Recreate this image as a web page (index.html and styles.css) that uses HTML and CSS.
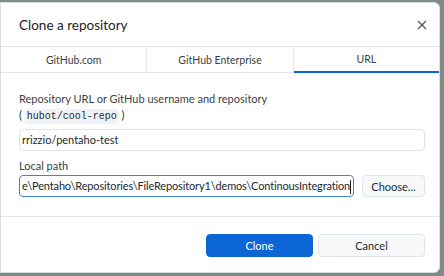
FILE: index.html
```html
<!DOCTYPE html>
<html lang="en">

<head>
    <meta charset="UTF-8">
    <meta name="viewport" content="width=device-width, initial-scale=1.0">
    <title>Clone a repository</title>
    <link rel="stylesheet" href="styles.css">
</head>

<body>
    <div class="dialog">
        <div class="header">
            <div class="title">Clone a repository</div>
            <div class="close">
                <svg width="10" height="10" viewBox="0 0 10 10">
                    <path d="M1 1L9 9M9 1L1 9" stroke="#555" stroke-width="1.3" fill="none"/>
                </svg>
            </div>
        </div>
        <div class="tabs">
            <div class="tab">GitHub.com</div>
            <div class="tab">GitHub Enterprise</div>
            <div class="tab active">URL</div>
        </div>
        <div class="content">
            <div class="label">Repository URL or GitHub username and repository</div>
            <div class="hint">( <code>hubot/cool-repo</code> )</div>
            <div class="input">rrizzio/pentaho-test</div>

            <div class="label path-label">Local path</div>
            <div class="row">
                <div class="input focused">e\Pentaho\Repositories\FileRepository1\demos\ContinousIntegration<span class="caret"></span></div>
                <button class="btn">Choose...</button>
            </div>
        </div>
        <div class="footer">
            <button class="btn primary">Clone</button>
            <button class="btn">Cancel</button>
        </div>
    </div>
</body>

</html>
```
FILE: styles.css
```css
body {
    margin: 0;
    padding: 2px 4px 3px 0;
    height: 276px;
    box-sizing: border-box;
    background-color: #7f8b87;
    font-family: Lato, sans-serif;
    color: #24292e;
    overflow: hidden;
}

.dialog {
    background-color: white;
    border: 1px solid #d8dde2;
    border-radius: 0 6px 6px 0;
    height: 100%;
    box-sizing: border-box;
    display: flex;
    flex-direction: column;
}

.header {
    display: flex;
    align-items: center;
    justify-content: space-between;
    height: 43px;
    padding: 0 12px 0 18px;
    border-bottom: 1px solid #e4e7ea;
}

.title {
    font-size: 13.5px;
    color: #1f2326;
}

.close {
    display: flex;
}

.tabs {
    display: flex;
    height: 25px;
    border-bottom: 1px solid #e4e7ea;
}

.tab {
    flex: 1;
    display: flex;
    align-items: center;
    justify-content: center;
    font-size: 10.5px;
    color: #3a3f44;
    border-right: 1px solid #e4e7ea;
}

.tab:last-child {
    border-right: none;
}

.tab.active {
    border-bottom: 2px solid #0b65d5;
    margin-bottom: -1px;
}

.content {
    padding: 18px 14px 0 18px;
    border-bottom: 1px solid #e4e7ea;
    height: 144px;
    box-sizing: border-box;
}

.label {
    font-size: 11px;
    line-height: 16px;
    color: #3a3f44;
}

.hint {
    font-size: 11px;
    line-height: 16px;
    margin-bottom: 4px;
}

code {
    font-family: "Liberation Mono", monospace;
    font-size: 10px;
    background-color: #eef3f8;
    padding: 2px 2px;
    border-radius: 3px;
}

.input {
    height: 22px;
    box-sizing: border-box;
    border: 1px solid #dfe3e7;
    border-radius: 4px;
    font-size: 11px;
    line-height: 20px;
    padding: 0 2px;
    white-space: nowrap;
    overflow: hidden;
}

.path-label {
    margin-top: 7px;
    margin-bottom: 1px;
}

.row {
    display: flex;
    gap: 8px;
}

.row .input {
    flex: 1;
}

.input.focused {
    border-color: #3e84d8;
    letter-spacing: -0.15px;
}

.caret {
    display: inline-block;
    width: 1px;
    height: 14px;
    background-color: #222;
    vertical-align: middle;
}

.btn {
    font-family: Lato, sans-serif;
    font-size: 11px;
    color: #24292e;
    background-color: #f8f9fa;
    border: 1px solid #e1e4e8;
    border-radius: 4px;
    height: 22px;
    padding: 0 4px;
    width: 63px;
    flex-shrink: 0;
}

.footer {
    display: flex;
    justify-content: flex-end;
    gap: 5px;
    padding: 17px 14px 0 0;
}

.footer .btn {
    width: 107px;
    height: 23px;
}

.btn.primary {
    background-color: #0b65d5;
    border-color: #0b65d5;
    color: white;
}
```
